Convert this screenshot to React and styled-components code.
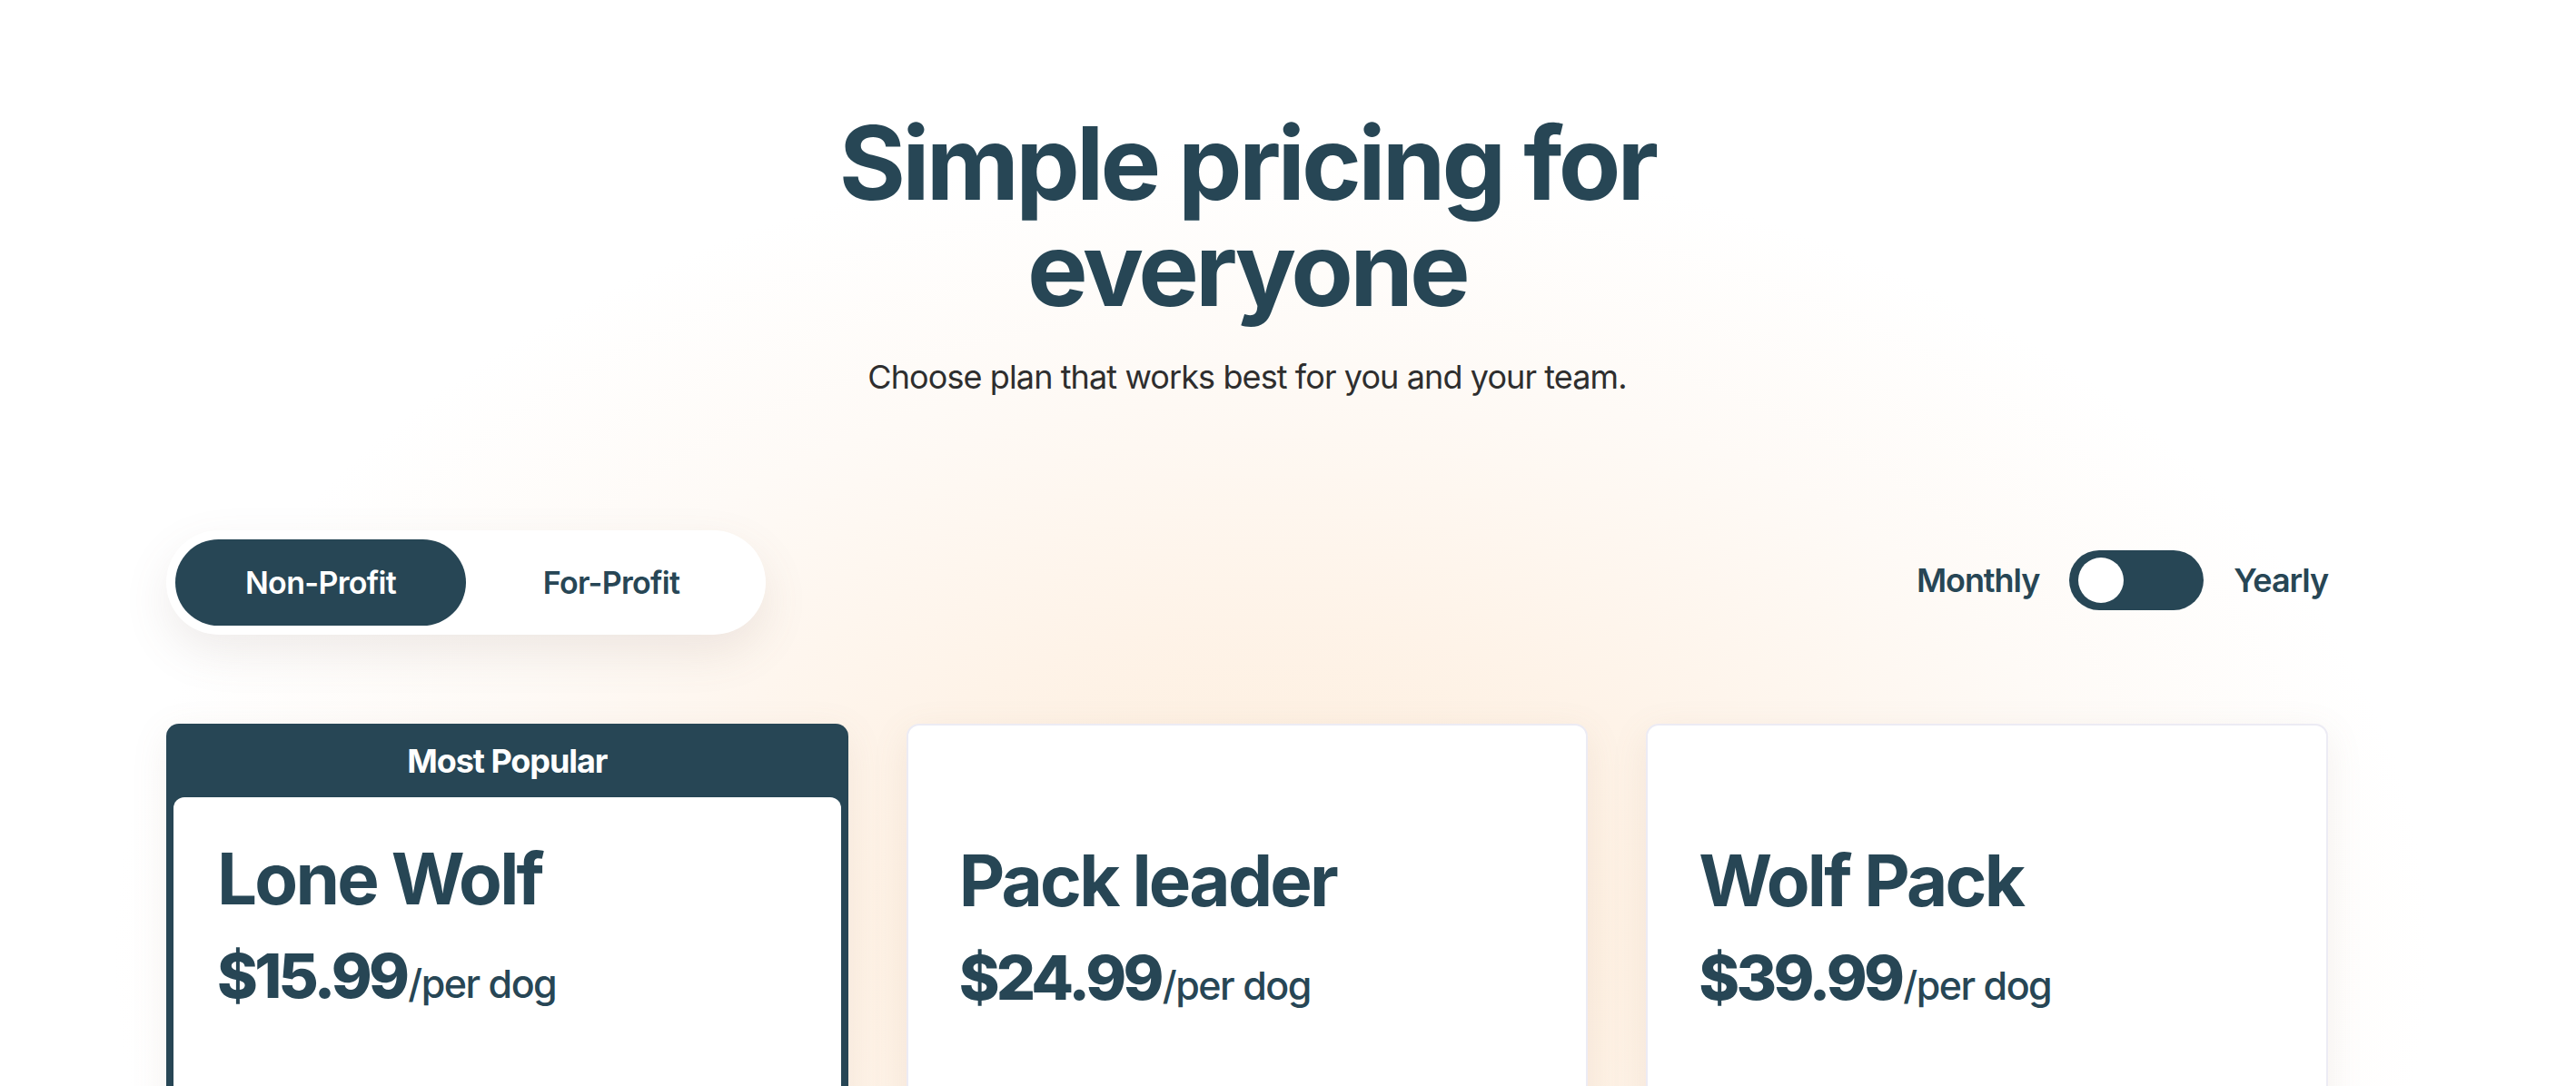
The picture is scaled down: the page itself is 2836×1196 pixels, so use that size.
import React, { useState } from 'react';
import styled, { createGlobalStyle } from 'styled-components';

const GlobalStyle = createGlobalStyle`
  html, body {
    margin: 0;
    padding: 0;
    background: #ffffff;
  }
  body {
    font-family: Inter, "Noto Sans", "Liberation Sans", sans-serif;
    color: #274655;
  }
`;

const Page = styled.div`
  height: 100vh;
  overflow: hidden;
  background: radial-gradient(
    ellipse 1500px 1050px at 1400px 1050px,
    #fdebd7 0%,
    #fef3e8 35%,
    #fefaf6 62%,
    #ffffff 85%
  );
`;

const Container = styled.div`
  width: 2380px;
  margin-left: 183px;
  padding-top: 121px;
`;

const Hero = styled.header`
  text-align: center;
`;

const Title = styled.h1`
  margin: 0;
  font-size: 112px;
  line-height: 117px;
  font-weight: 700;
  letter-spacing: -0.034em;
  color: #274655;
`;

const Subtitle = styled.p`
  margin: 38px 0 0;
  font-size: 36px;
  line-height: 44px;
  font-weight: 400;
  letter-spacing: -0.025em;
  color: #2e2e2e;
`;

const ControlsRow = styled.div`
  display: flex;
  justify-content: space-between;
  align-items: center;
  margin-top: 147px;
`;

const Segmented = styled.div`
  display: inline-flex;
  padding: 10px;
  background: #ffffff;
  border-radius: 999px;
  box-shadow: 0 20px 50px rgba(120, 100, 90, 0.12);
`;

const Segment = styled.button`
  width: 320px;
  height: 95px;
  border: none;
  border-radius: 999px;
  font-family: inherit;
  font-size: 34px;
  font-weight: 600;
  letter-spacing: -0.02em;
  cursor: pointer;
  background: ${(p) => (p.$active ? '#274655' : 'transparent')};
  color: ${(p) => (p.$active ? '#ffffff' : '#274655')};
`;

const Billing = styled.div`
  display: flex;
  align-items: center;
  gap: 33px;
  margin-top: -6px;
`;

const BillingLabel = styled.span`
  font-size: 36px;
  font-weight: 600;
  letter-spacing: -0.03em;
  color: #274655;
`;

const Switch = styled.button`
  position: relative;
  width: 148px;
  height: 66px;
  border: none;
  padding: 0;
  border-radius: 999px;
  background: #274655;
  cursor: pointer;
`;

const Knob = styled.span`
  position: absolute;
  top: 8px;
  left: ${(p) => (p.$on ? '90px' : '10px')};
  width: 50px;
  height: 50px;
  border-radius: 50%;
  background: #ffffff;
`;

const CardGrid = styled.div`
  display: grid;
  grid-template-columns: repeat(3, 1fr);
  gap: 64px;
  margin-top: 98px;
`;

const Card = styled.article`
  display: flex;
  flex-direction: column;
  height: 760px;
  padding: 0 8px 8px;
  border-radius: 14px;
  background: ${(p) => (p.$popular ? '#274655' : '#ffffff')};
  border: ${(p) => (p.$popular ? 'none' : '2px solid #ecebf4')};
  box-shadow: 0 10px 40px rgba(150, 120, 100, 0.1);
`;

const CardBadge = styled.div`
  height: 81px;
  display: flex;
  align-items: center;
  justify-content: center;
  font-size: 36px;
  font-weight: 700;
  letter-spacing: -0.03em;
  color: #ffffff;
`;

const CardBody = styled.div`
  flex: 1;
  background: #ffffff;
  border-radius: 12px;
  padding: 42px 48px;
`;

const PlanName = styled.h2`
  margin: 0;
  font-size: 78px;
  line-height: 96px;
  font-weight: 700;
  letter-spacing: -0.035em;
  color: #274655;
`;

const PriceRow = styled.div`
  display: flex;
  align-items: baseline;
  margin-top: 17px;
  color: #274655;
`;

const Amount = styled.span`
  font-size: 68px;
  font-weight: 800;
  letter-spacing: -0.055em;
`;

const Per = styled.span`
  margin-left: 2px;
  font-size: 43px;
  font-weight: 500;
  letter-spacing: -0.035em;
`;

const plans = [
  { name: 'Lone Wolf', price: '$15.99', popular: true },
  { name: 'Pack leader', price: '$24.99' },
  { name: 'Wolf Pack', price: '$39.99' },
];

function PlanCard({ plan }) {
  return (
    <Card $popular={plan.popular}>
      <CardBadge>{plan.popular ? 'Most Popular' : ''}</CardBadge>
      <CardBody>
        <PlanName>{plan.name}</PlanName>
        <PriceRow>
          <Amount>{plan.price}</Amount>
          <Per>/per dog</Per>
        </PriceRow>
      </CardBody>
    </Card>
  );
}

export default function App() {
  const [org, setOrg] = useState('non');
  const [yearly, setYearly] = useState(false);

  return (
    <Page>
      <GlobalStyle />
      <Container>
        <Hero>
          <Title>
            Simple pricing for
            <br />
            everyone
          </Title>
          <Subtitle>Choose plan that works best for you and your team.</Subtitle>
        </Hero>

        <ControlsRow>
          <Segmented>
            <Segment $active={org === 'non'} onClick={() => setOrg('non')}>
              Non-Profit
            </Segment>
            <Segment $active={org === 'for'} onClick={() => setOrg('for')}>
              For-Profit
            </Segment>
          </Segmented>
          <Billing>
            <BillingLabel>Monthly</BillingLabel>
            <Switch onClick={() => setYearly(!yearly)}>
              <Knob $on={yearly} />
            </Switch>
            <BillingLabel>Yearly</BillingLabel>
          </Billing>
        </ControlsRow>

        <CardGrid>
          {plans.map((p) => (
            <PlanCard key={p.name} plan={p} />
          ))}
        </CardGrid>
      </Container>
    </Page>
  );
}
